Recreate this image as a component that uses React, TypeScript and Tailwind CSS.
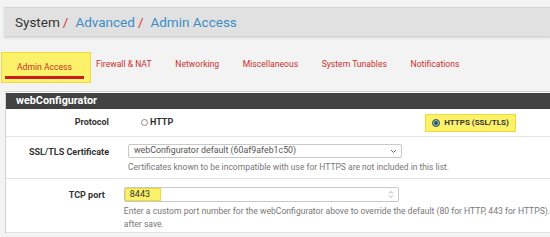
import React from 'react';

const tabs = ['Firewall & NAT', 'Networking', 'Miscellaneous', 'System Tunables', 'Notifications'];

const Radio: React.FC<{ checked?: boolean }> = ({ checked }) => (
  <span
    className={
      checked
        ? 'inline-block h-[8px] w-[8px] shrink-0 rounded-full border border-[#555] bg-[#1d5c55] shadow-[inset_0_0_0_1px_#9fd0c8]'
        : 'inline-block h-[7px] w-[7px] shrink-0 rounded-full border border-[#8a8a8a] bg-white'
    }
  />
);

const App: React.FC = () => {
  return (
    <div className="h-[237px] w-[550px] overflow-hidden bg-[#f3f3f3] font-['Roboto',sans-serif]">
      {/* breadcrumb */}
      <div className="ml-[4px] mt-[7px] flex h-[30px] items-center border-y border-[#d4d4d4] bg-[#e1e1e1] pl-[11px] text-[13.5px] shadow-[0_1px_2px_rgba(0,0,0,0.12)]">
        <span className="text-[#333]">System</span>
        <span className="ml-[3px] text-[#d9383a]">/</span>
        <span className="ml-[7px] text-[#3c8dc5]">Advanced</span>
        <span className="ml-[3px] text-[#d9383a]">/</span>
        <span className="ml-[7px] text-[#3c8dc5]">Admin Access</span>
      </div>

      {/* tabs */}
      <div className="mt-[15px] flex h-[31px] items-start text-[8.6px] text-[#c9302c]">
        <div className="ml-[1px] flex h-[31px] w-[90px] shrink-0 items-start border border-[#f0d93a] bg-[#fbf26a] pl-[3px]">
          <div className="mt-[5px] flex h-[21px] w-[79px] items-center justify-center border-b-[3px] border-[#c81f25]">
            Admin Access
          </div>
        </div>
        {tabs.map((t, i) => (
          <div
            key={t}
            className={i === 0 ? 'flex h-[24px] items-center pl-[5px] pr-[12px]' : 'flex h-[24px] items-center px-[11.8px]'}
          >
            {t}
          </div>
        ))}
      </div>

      {/* panel */}
      <div className="ml-[5px] mt-[8px] border-l border-t border-[#d2d2d2] bg-white">
        <div className="flex h-[17px] items-center border-t border-white bg-[#424242] pl-[10px] text-[10.8px] font-bold text-white">
          webConfigurator
        </div>

        {/* Protocol */}
        <div className="flex h-[28px] items-center border-b border-[#e3e3e3] text-[9px]">
          <div className="w-[103px] text-right font-bold text-[#333]">Protocol</div>
          <div className="ml-[32px] flex items-center gap-[2px] font-bold text-[#333]">
            <Radio />
            <span>HTTP</span>
          </div>
          <div className="ml-[252px] flex h-[18px] w-[91px] shrink-0 items-center gap-[4px] whitespace-nowrap border border-[#f0d93a] bg-[#fbf26a] pl-[6px] text-[8px] font-bold text-[#333]">
            <Radio checked />
            <span>HTTPS (SSL/TLS)</span>
          </div>
        </div>

        {/* SSL/TLS */}
        <div className="flex h-[42px] border-b border-[#e3e3e3] text-[9px]">
          <div className="mt-[9px] w-[103px] text-right font-bold text-[#333]">SSL/TLS Certificate</div>
          <div className="ml-[19px] mt-[7px] flex flex-col">
            <div className="flex h-[14px] w-[274px] items-center justify-between rounded-[2px] border border-[#c8c8c8] pl-[5px] pr-[4px] text-[8.8px] text-[#555]">
              <span>webConfigurator default (60af9afeb1c50)</span>
              <svg width="7" height="5" viewBox="0 0 7 5" className="text-[#666]">
                <path d="M1 1l2.5 2.5L6 1" fill="none" stroke="currentColor" strokeWidth="1" />
              </svg>
            </div>
            <div className="mt-[3px] text-[8.5px] text-[#777]">
              Certificates known to be incompatible with use for HTTPS are not included in this list.
            </div>
          </div>
        </div>

        {/* TCP port */}
        <div className="flex h-[54px] border-b border-[#e3e3e3] text-[9px]">
          <div className="mt-[10px] w-[103px] text-right font-bold text-[#333]">TCP port</div>
          <div className="ml-[19px] mt-[8px] flex flex-col">
            <div className="flex h-[15px] w-[275px] items-center justify-between rounded-[2px] border border-[#c8c8c8] pr-[4px]">
              <div className="flex h-full w-[36px] items-center border border-[#f0d93a] bg-[#fbf26a] pl-[4px] text-[#333]">
                8443
              </div>
              <svg width="6" height="9" viewBox="0 0 6 9" className="text-[#999]">
                <path d="M1 3.5L3 1.5L5 3.5M1 5.5L3 7.5L5 5.5" fill="none" stroke="currentColor" strokeWidth="0.8" />
              </svg>
            </div>
            <div className="mt-[3px] text-[8.6px] leading-[13px] text-[#777]">
              <div className="whitespace-nowrap">
                Enter a custom port number for the webConfigurator above to override the default (80 for HTTP, 443 for HTTPS).
              </div>
              <div>after save.</div>
            </div>
          </div>
        </div>
      </div>
    </div>
  );
};

export default App;
